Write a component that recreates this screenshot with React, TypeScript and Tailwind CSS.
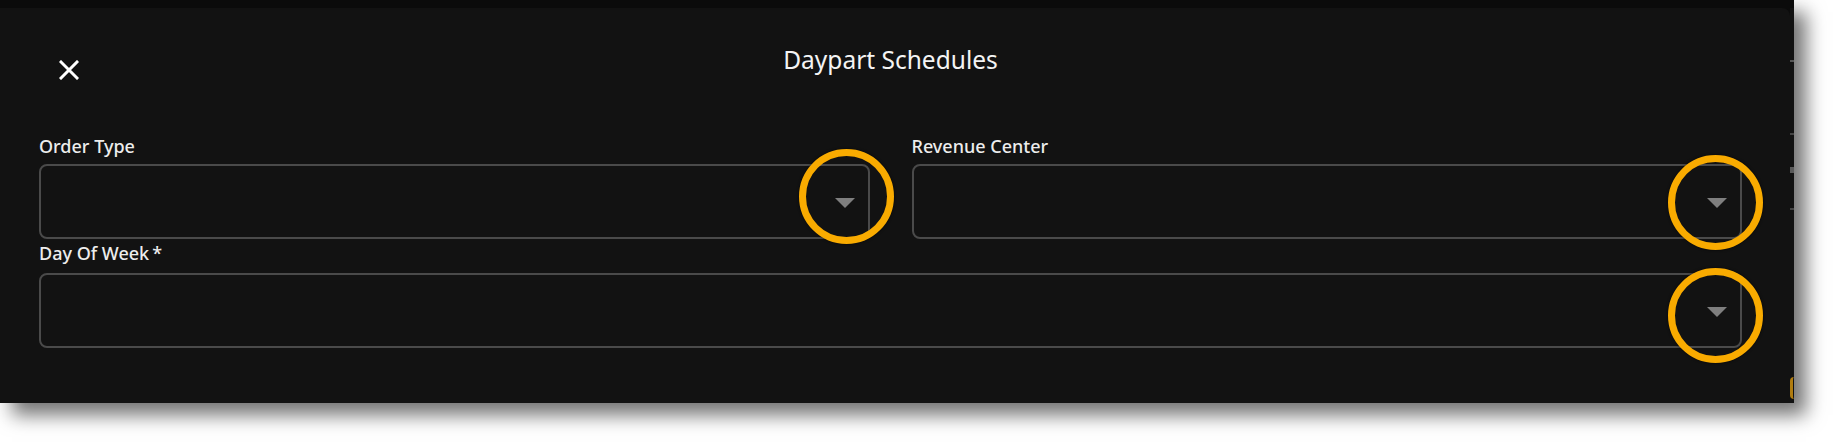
import React from "react";

function Caret() {
  return (
    <svg width="20" height="10" viewBox="0 0 20 10" className="block">
      <polygon points="0,0 20,0 10,10" fill="#7f7f7f" />
    </svg>
  );
}

function SelectBox() {
  return (
    <div className="h-[75px] rounded-[8px] border-2 border-[#4a4a4a] flex items-center justify-end pr-[13px] pt-[2px]">
      <Caret />
    </div>
  );
}

function Ring({ cls }: { cls: string }) {
  return (
    <div
      className={`absolute w-[95px] h-[95px] rounded-full border-[7px] border-[#f9ab00] shadow-[0_0_3px_rgba(0,0,0,0.7)] ${cls}`}
    />
  );
}

export default function App() {
  return (
    <div className="w-[1834px] h-[444px] bg-white" style={{ fontFamily: "'Noto Sans', sans-serif" }}>
      <div className="w-[1794px] h-[403px] bg-[#0b0b0b] flex flex-col shadow-[12px_12px_18px_rgba(0,0,0,0.55)]">
        <div className="h-[8px]" />
        <div className="flex flex-1">
          <div className="relative w-[1790px] bg-[#121212] rounded-tr-[8px] pl-[39px] pr-[48px]">
            <div className="grid grid-cols-[1fr_auto_1fr] items-start pt-[36px]">
              <button className="mt-[16px] ml-[20px] w-[20px] h-[20px] justify-self-start">
                <svg width="20" height="20" viewBox="0 0 20 20" className="block">
                  <path d="M2 2 L18 18 M18 2 L2 18" stroke="#ffffff" strokeWidth="3" strokeLinecap="square" />
                </svg>
              </button>
              <div className="text-[24.5px] leading-[32px] text-[#f4f4f4]">Daypart Schedules</div>
              <div />
            </div>
            <div className="grid grid-cols-2 gap-x-[42px] mt-[54px]">
              <div>
                <div className="text-[18px] leading-[24px] font-medium text-[#ededed] mb-[6px]">Order Type</div>
                <SelectBox />
              </div>
              <div>
                <div className="text-[18px] leading-[24px] font-medium text-[#ededed] mb-[6px]">Revenue Center</div>
                <SelectBox />
              </div>
              <div className="col-span-2 mt-[2px]">
                <div className="text-[18px] leading-[24px] font-medium text-[#ededed] mb-[8px]">
                  Day Of Week<span className="ml-[3px]">*</span>
                </div>
                <SelectBox />
              </div>
            </div>
            <Ring cls="left-[799px] top-[141px]" />
            <Ring cls="left-[1668px] top-[147px]" />
            <Ring cls="left-[1668px] top-[260px]" />
          </div>
          <div className="relative w-[4px] bg-[#111111]">
            <div className="absolute left-0 top-[52px] w-[4px] h-[2px] bg-[#555555]" />
            <div className="absolute left-0 top-[125px] w-[4px] h-[2px] bg-[#444444]" />
            <div className="absolute left-0 top-[159px] w-[4px] h-[6px] bg-[#5a5a5a]" />
            <div className="absolute left-0 top-[200px] w-[4px] h-[2px] bg-[#444444]" />
            <div className="absolute left-0 top-[369px] w-[4px] h-[22px] border-l-[3px] border-[#b07c10] rounded-l-full" />
          </div>
        </div>
      </div>
    </div>
  );
}
